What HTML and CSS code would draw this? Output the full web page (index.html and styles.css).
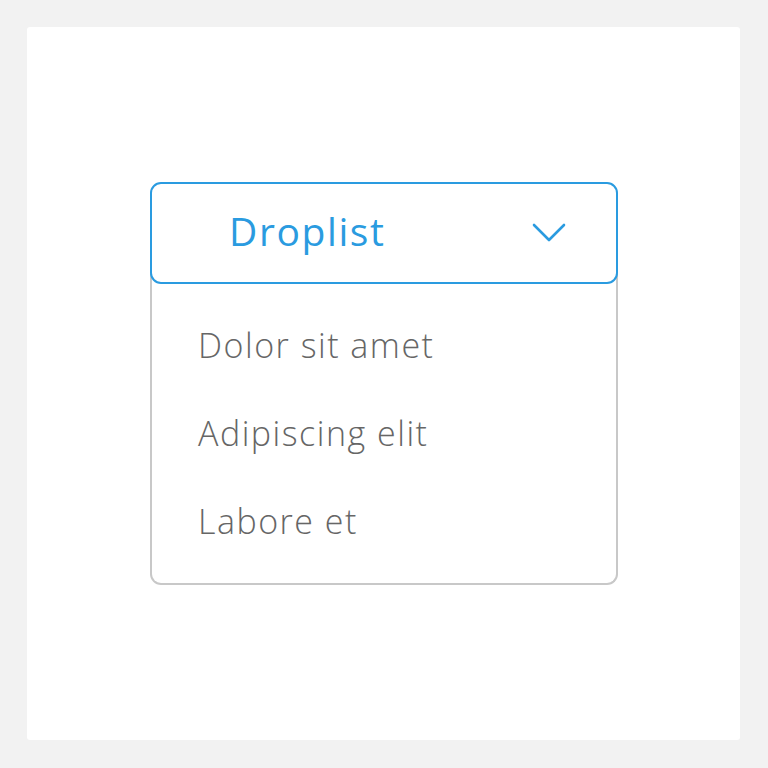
FILE: index.html
```html
<!DOCTYPE html>
<html lang="en">
<head>
    <meta charset="UTF-8">
    <meta name="viewport" content="width=device-width, initial-scale=1.0">
    <title>Droplist</title>
    <link rel="stylesheet" href="styles.css">
</head>
<body>
    <div class="card">
        <div class="droplist">
            <div class="droplist-header">
                <span class="droplist-title">Droplist</span>
                <svg class="chevron" width="34" height="20" viewBox="0 0 34 20">
                    <path d="M2 2 L17 17 L32 2" fill="none" stroke="#2a9be0" stroke-width="2.6" stroke-linecap="round" stroke-linejoin="round"/>
                </svg>
            </div>
            <ul class="droplist-items">
                <li>Dolor sit amet</li>
                <li>Adipiscing elit</li>
                <li>Labore et</li>
            </ul>
        </div>
    </div>
</body>
</html>
```

FILE: styles.css
```css
body {
    margin: 0;
    padding: 27px;
    background-color: #f2f2f2;
    font-family: "Open Sans", Lato, sans-serif;
}
.card {
    width: 713px;
    height: 713px;
    background-color: #fff;
    border-radius: 3px;
    box-sizing: border-box;
    padding: 155px 0 0 123px;
}
.droplist {
    width: 468px;
}
.droplist-header {
    height: 102px;
    box-sizing: border-box;
    border: 2px solid #2a9be0;
    border-radius: 11px;
    display: flex;
    align-items: center;
    padding: 0 50px 6px 77px;
    background-color: #fff;
    position: relative;
    z-index: 1;
}
.droplist-title {
    flex: 1;
    color: #2a9be0;
    font-size: 39px;
    font-weight: 500;
    letter-spacing: 1.6px;
}
.chevron {
    display: block;
    margin-top: 6px;
}
.droplist-items {
    list-style: none;
    margin: -10px 0 0;
    padding: 27px 0 0 46px;
    height: 311px;
    box-sizing: border-box;
    border: 2px solid #c8c8c8;
    border-top: none;
    border-radius: 0 0 11px 11px;
}
.droplist-items li {
    color: #666;
    font-size: 34px;
    font-weight: 300;
    line-height: 88px;
    letter-spacing: 1.5px;
}
```
